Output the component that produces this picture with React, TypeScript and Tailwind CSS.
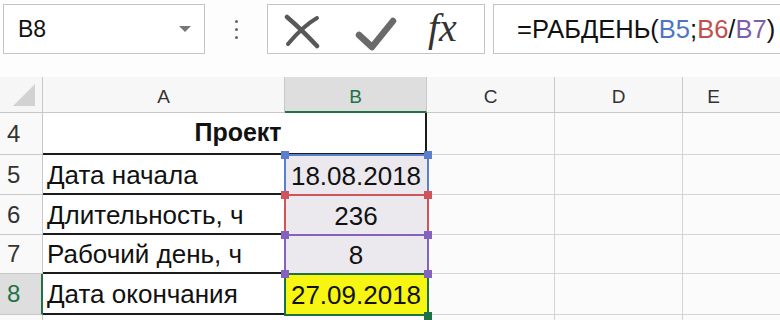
import React from "react";

const rows = [
  { n: "5", a: "Дата начала", b: "18.08.2018" },
  { n: "6", a: "Длительность, ч", b: "236" },
  { n: "7", a: "Рабочий день, ч", b: "8" },
];

function Handle({ x, y, color }: { x: number; y: number; color: string }) {
  return (
    <div
      className="absolute w-[8px] h-[8px]"
      style={{ left: x - 4, top: y - 4, background: color }}
    />
  );
}

export default function App() {
  return (
    <div className="relative w-[780px] h-[320px] overflow-hidden bg-[#fbfbfb] font-['Liberation_Sans',Arial,sans-serif] text-[#111]">
      {/* formula bar */}
      <div className="flex h-[77px] pt-[4px] pl-[3px] bg-[#fdfdfd]">
        <div className="flex items-center w-[202px] h-[50px] border border-[#c4c4c4] bg-white pl-[14px] pr-[13px] text-[23px]">
          <span>B8</span>
          <svg className="ml-auto" width="12" height="8" viewBox="0 0 12 8">
            <path d="M0 1 L12 1 L6 7 Z" fill="#777" />
          </svg>
        </div>
        <div className="flex flex-col items-center justify-center gap-[5px] w-[62px] h-[50px]">
          <div className="w-[3px] h-[3px] rounded-full bg-[#666]" />
          <div className="w-[3px] h-[3px] rounded-full bg-[#666]" />
          <div className="w-[3px] h-[3px] rounded-full bg-[#666]" />
        </div>
        <div className="relative w-[218px] h-[50px] border border-[#c4c4c4] bg-white">
          <svg className="absolute left-[15px] top-[8px]" width="40" height="36" viewBox="0 0 40 36">
            <path d="M4 4 Q18 16 34 33" stroke="#585858" strokeWidth="4.5" fill="none" strokeLinecap="round" />
            <path d="M34 5 Q20 13 5 31" stroke="#585858" strokeWidth="4" fill="none" strokeLinecap="round" />
          </svg>
          <svg className="absolute left-[87px] top-[10px]" width="42" height="38" viewBox="0 0 42 38">
            <path d="M4 20 L17 32 L38 6" stroke="#6a6a6a" strokeWidth="6.5" fill="none" strokeLinecap="round" strokeLinejoin="round" />
          </svg>
          <span className="absolute left-[160px] top-[-2px] font-['Liberation_Serif',serif] italic text-[40px] leading-[50px] text-[#333]">
            fx
          </span>
        </div>
        <div className="flex items-center flex-1 h-[50px] ml-[8px] border border-r-0 border-[#c4c4c4] bg-white pl-[23px] text-[25.5px] whitespace-nowrap">
          <span>=РАБДЕНЬ(</span>
          <span className="text-[#4f74c2]">B5</span>
          <span>;</span>
          <span className="text-[#c0504d]">B6</span>
          <span>/</span>
          <span className="text-[#7d5fa8]">B7</span>
          <span>)</span>
        </div>
      </div>

      {/* sheet grid */}
      <div className="grid grid-cols-[43px_242px_142px_128px_128px_1fr] grid-rows-[36px_42px_40px_40px_39px_41px_20px]">
        {/* header row */}
        <div className="relative bg-[#f6f6f6] border-r border-b border-[#c8c8c8]">
          <svg className="absolute right-[7px] bottom-[6px]" width="22" height="22" viewBox="0 0 22 22">
            <path d="M22 0 L22 22 L0 22 Z" fill="#d2d2d2" />
          </svg>
        </div>
        <div className="flex items-center justify-center pt-[6px] bg-[#f7f7f7] border-r border-b border-[#c8c8c8] text-[19px] text-[#333]">A</div>
        <div className="flex items-center justify-center pt-[6px] bg-[#dedede] border-r border-[#c8c8c8] border-b-2 border-b-[#217346] text-[19px] text-[#217346]">B</div>
        <div className="flex items-center justify-center pt-[6px] bg-[#f7f7f7] border-r border-b border-[#c8c8c8] text-[19px] text-[#333]">C</div>
        <div className="flex items-center justify-center pt-[6px] bg-[#f7f7f7] border-r border-b border-[#c8c8c8] text-[19px] text-[#333]">D</div>
        <div className="flex items-center justify-center pt-[6px] pr-[36px] bg-[#f7f7f7] border-b border-[#c8c8c8] text-[19px] text-[#333]">E</div>

        {/* row 4 */}
        <div className="flex items-center pl-[7px] bg-[#f9f9f9] border-r border-b border-[#c8c8c8] text-[24px] text-[#333]">4</div>
        <div className="col-span-2 flex items-center justify-center pl-[8px] bg-white border-r-2 border-b-2 border-[#1b1b1b] text-[25px] font-bold">Проект</div>
        <div className="border-r border-b border-[#d4d4d4]" />
        <div className="border-r border-b border-[#d4d4d4]" />
        <div className="border-b border-[#d4d4d4]" />

        {rows.map((r) => (
          <React.Fragment key={r.n}>
            <div className="flex items-center pl-[7px] bg-[#f9f9f9] border-r border-b border-[#c8c8c8] text-[24px] text-[#333]">{r.n}</div>
            <div className="flex items-center pl-[4px] pt-[2px] bg-white border-b-2 border-[#1b1b1b] text-[26px]">{r.a}</div>
            <div className="flex items-center justify-center pt-[2px] bg-[#ece9ee] text-[26px]">{r.b}</div>
            <div className="border-r border-b border-[#d4d4d4]" />
            <div className="border-r border-b border-[#d4d4d4]" />
            <div className="border-b border-[#d4d4d4]" />
          </React.Fragment>
        ))}

        {/* row 8 */}
        <div className="flex items-center pl-[7px] bg-[#dedede] border-r-2 border-r-[#217346] border-b border-b-[#c8c8c8] text-[24px] text-[#217346]">8</div>
        <div className="flex items-center pl-[4px] pt-[2px] bg-white border-b-2 border-[#1b1b1b] text-[26px]">Дата окончания</div>
        <div className="flex items-center justify-center pt-[2px] bg-[#f6f612] text-[26px]">27.09.2018</div>
        <div className="border-r border-b border-[#d4d4d4]" />
        <div className="border-r border-b border-[#d4d4d4]" />
        <div className="border-b border-[#d4d4d4]" />

        {/* row 9 */}
        <div className="bg-[#f9f9f9] border-r border-[#c8c8c8]" />
        <div className="bg-white" />
        <div className="border-r border-[#d4d4d4]" />
        <div className="border-r border-[#d4d4d4]" />
        <div className="border-r border-[#d4d4d4]" />
        <div />
      </div>

      {/* range highlight overlays */}
      <div className="absolute left-[284px] top-[154px] w-[145px] h-[42px] border-2 border-[#5b7fce]" />
      <div className="absolute left-[284px] top-[194px] w-[145px] h-[42px] border-2 border-[#d0555a]" />
      <div className="absolute left-[284px] top-[234px] w-[145px] h-[41px] border-2 border-[#8462bf]" />
      <div className="absolute left-[284px] top-[273px] w-[145px] h-[43px] border-2 border-[#1e7145]" />
      <Handle x={285} y={155} color="#5b7fce" />
      <Handle x={428} y={155} color="#5b7fce" />
      <Handle x={285} y={195} color="#d0555a" />
      <Handle x={428} y={195} color="#d0555a" />
      <Handle x={285} y={235} color="#8462bf" />
      <Handle x={428} y={235} color="#8462bf" />
      <Handle x={285} y={274} color="#8462bf" />
      <Handle x={428} y={274} color="#8462bf" />
      <Handle x={428} y={316} color="#1e7145" />
    </div>
  );
}
